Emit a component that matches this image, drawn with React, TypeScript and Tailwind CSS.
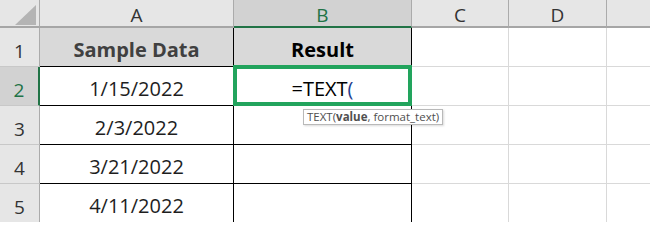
import React from "react";

const hdr = "bg-[#e6e6e6] border-r border-r-[#ababab] border-b-2 border-b-[#a6a6a6] text-[19px] leading-[24px] text-[#333] text-center pt-[3px]";
const rowHdr = "bg-[#e6e6e6] border-r border-r-[#ababab] border-b border-b-[#c8c8c8] text-[19px] leading-[24px] text-[#333] text-center pt-[11px]";
const dataCell = "border-r border-b border-black flex items-end justify-center pb-[3px] text-[20px] leading-[27px] text-[#1e1e1e]";
const emptyCell = "border-r border-b border-[#d9d9d9]";

export default function App() {
  const dates = ["2/3/2022", "3/21/2022", "4/11/2022"];
  return (
    <div className="w-[650px] h-[222px] overflow-hidden bg-white font-['Open_Sans',sans-serif]">
      <div className="grid grid-cols-[40px_194px_178px_97px_98px_100px] grid-rows-[28px_39px_39px_39px_39px_39px]">
        {/* header row */}
        <div className="bg-[#e6e6e6] border-r border-r-[#ababab] border-b-2 border-b-[#a6a6a6] flex justify-end items-start pr-[3px] pt-[5px]">
          <svg width="21" height="20" viewBox="0 0 21 20">
            <polygon points="0,20 21,20 21,0" fill="#b4b4b4" />
          </svg>
        </div>
        <div className={hdr}>A</div>
        <div className="bg-[#d2d2d2] border-r border-r-[#ababab] border-b-2 border-b-[#217346] text-[19px] leading-[24px] text-[#217346] text-center pt-[3px]">B</div>
        <div className={hdr}>C</div>
        <div className={hdr}>D</div>
        <div className={hdr}></div>

        {/* row 1 */}
        <div className={rowHdr}>1</div>
        <div className={`${dataCell} bg-[#d9d9d9] font-bold text-[#404040]`}>Sample Data</div>
        <div className={`${dataCell} bg-[#d9d9d9] font-bold text-black`}>Result</div>
        <div className={emptyCell}></div>
        <div className={emptyCell}></div>
        <div className={emptyCell}></div>

        {/* row 2 */}
        <div className="bg-[#d2d2d2] border-r-2 border-r-[#217346] border-b border-b-[#c8c8c8] text-[19px] leading-[24px] text-[#217346] text-center pt-[11px]">2</div>
        <div className={dataCell}>1/15/2022</div>
        <div className={`${dataCell} relative text-black`}>
          <span>
            =TEXT<span className="text-[#23408e]">(</span>
          </span>
          <div className="absolute -left-px -top-[2px] -right-px -bottom-px border-[4px] border-[#22a45d]"></div>
          <div className="absolute left-[69px] top-[42px] z-10 bg-white border border-[#b9b9b9] shadow-[1px_1px_2px_rgba(0,0,0,0.15)] px-[3px] h-[16px] flex items-center whitespace-nowrap text-[11.5px] leading-[14px] text-[#505050]">
            TEXT(<span className="font-bold">value</span>, format_text)
          </div>
        </div>
        <div className={emptyCell}></div>
        <div className={emptyCell}></div>
        <div className={emptyCell}></div>

        {/* rows 3-5 */}
        {dates.map((d, i) => (
          <React.Fragment key={d}>
            <div className={rowHdr}>{i + 3}</div>
            <div className={dataCell}>{d}</div>
            <div className={dataCell}></div>
            <div className={emptyCell}></div>
            <div className={emptyCell}></div>
            <div className={emptyCell}></div>
          </React.Fragment>
        ))}
      </div>
    </div>
  );
}
